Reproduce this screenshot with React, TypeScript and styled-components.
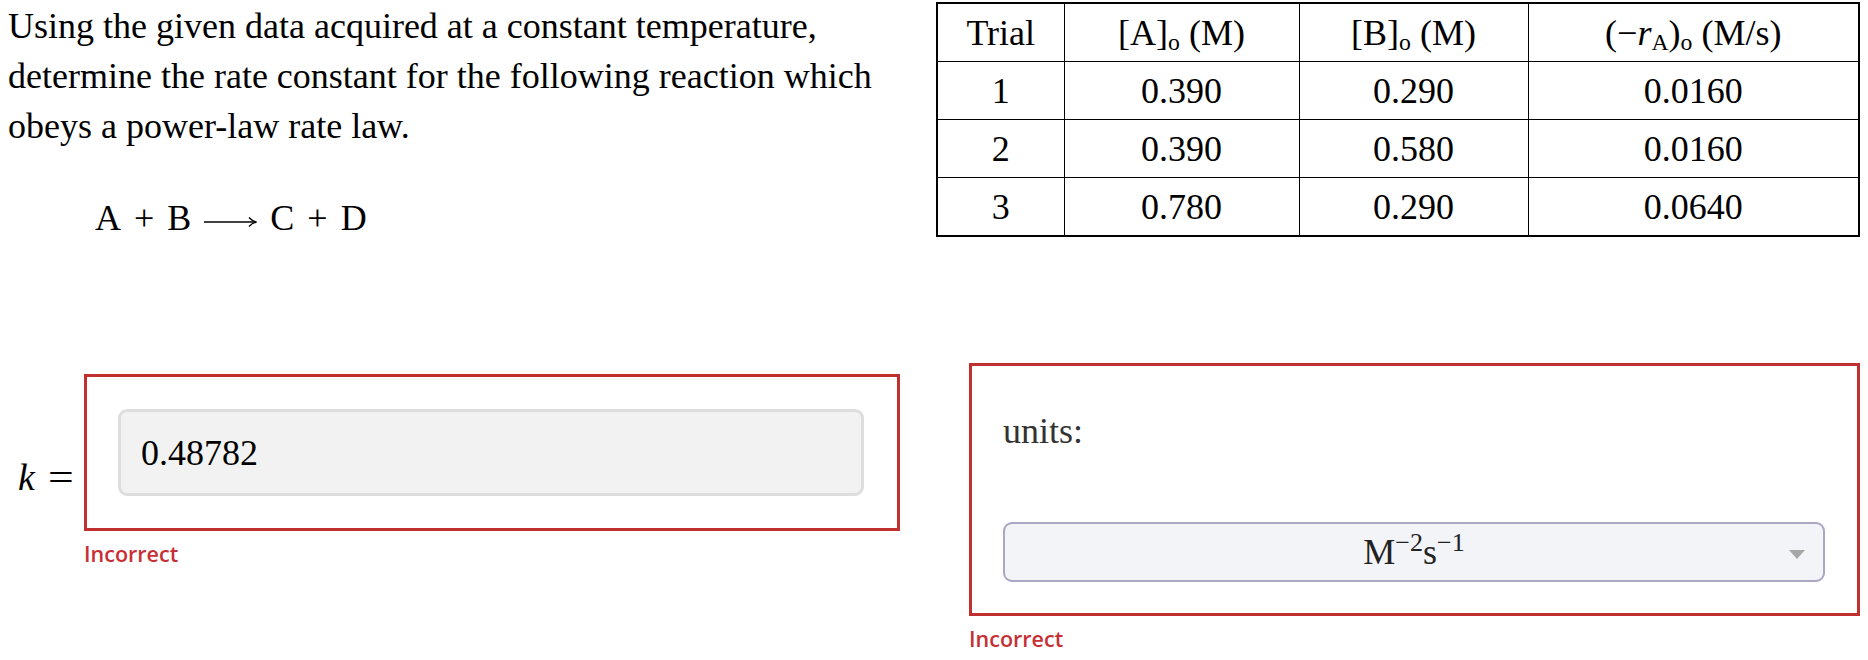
import React from 'react'
import styled, { createGlobalStyle } from 'styled-components'

const GlobalStyle = createGlobalStyle`
  html, body {
    margin: 0;
    padding: 0;
    background: #fff;
  }
  body {
    font-family: "Liberation Serif", "Times New Roman", serif;
    color: #000;
  }
`

const Page = styled.main`
  width: 1868px;
  box-sizing: border-box;
  padding: 1px 8px 0;
`

const TopRow = styled.section`
  display: flex;
  justify-content: space-between;
  align-items: flex-start;
`

const Prompt = styled.div`
  width: 912px;
  font-size: 36px;
  line-height: 50px;
`

const Paragraph = styled.p`
  margin: 0;
`

const Equation = styled.div`
  margin: 42px 0 0 87px;
  white-space: nowrap;
`

const Op = styled.span<{ $space: number }>`
  display: inline-block;
  margin: 0 ${p => p.$space}px;
`

const ArrowIcon = styled.svg`
  display: inline-block;
  vertical-align: 1px;
  margin: 0 13px;
`

const DataTable = styled.table`
  width: 922px;
  margin-top: 1px;
  border-collapse: collapse;
  table-layout: fixed;
  border: 2px solid #000;
  font-size: 36px;
`

const Cell = styled.td`
  border: 1px solid #000;
  height: 57px;
  padding: 0;
  text-align: center;
  vertical-align: middle;
  font-weight: normal;
  white-space: nowrap;
`

const Sub = styled.sub`
  font-size: 0.66em;
  vertical-align: -0.22em;
  line-height: 0;
`

const AnswerRow = styled.section`
  display: flex;
  justify-content: space-between;
  align-items: flex-start;
  margin-top: 120px;
`

const FieldGroup = styled.div<{ $offset?: number }>`
  display: flex;
  flex-direction: column;
  margin-top: ${p => p.$offset ?? 0}px;
`

const KField = styled.div`
  display: flex;
  align-items: flex-start;
`

const MathLabel = styled.div`
  width: 66px;
  padding: 83px 0 0 10px;
  display: flex;
  gap: 13px;
  font-size: 38px;
  line-height: 40px;
`

const Equals = styled.span`
  display: inline-block;
  transform: scaleX(1.2);
  transform-origin: left center;
`

const Frame = styled.div<{ $width: number; $pad: string }>`
  width: ${p => p.$width}px;
  box-sizing: border-box;
  border: 3px solid #c0302f;
  padding: ${p => p.$pad};
`

const ValueInput = styled.input`
  display: block;
  width: 100%;
  height: 87px;
  box-sizing: border-box;
  border: 3px solid #dedede;
  border-radius: 9px;
  background: #f2f2f2;
  padding: 0 20px;
  font-family: "Liberation Serif", "Times New Roman", serif;
  font-size: 36px;
  color: #000;
  outline: none;
`

const Feedback = styled.div`
  margin-top: 9px;
  font-family: "Open Sans", "Noto Sans", sans-serif;
  font-size: 21.5px;
  font-weight: 600;
  line-height: 28px;
  color: #c62f33;
`

const UnitsLabel = styled.div`
  font-size: 36px;
  line-height: 40px;
  color: #333;
`

const SelectBox = styled.div`
  position: relative;
  margin-top: 71px;
  height: 60px;
  box-sizing: border-box;
  border: 2px solid #aaa7c2;
  border-radius: 9px;
  background: #f3f4f8;
  display: flex;
  align-items: center;
  justify-content: center;
  font-size: 36px;
  color: #222;
`

const Sup = styled.sup`
  font-size: 26px;
  vertical-align: 13px;
  line-height: 0;
`

const Caret = styled.svg`
  position: absolute;
  right: 18px;
  top: 50%;
  margin-top: -2px;
`

const rows = [
  ['1', '0.390', '0.290', '0.0160'],
  ['2', '0.390', '0.580', '0.0160'],
  ['3', '0.780', '0.290', '0.0640'],
]

const App = () => {
  return (
    <>
      <GlobalStyle />
      <Page>
        <TopRow>
          <Prompt>
            <Paragraph>
              Using the given data acquired at a constant temperature, determine the rate
              constant for the following reaction which obeys a power-law rate law.
            </Paragraph>
            <Equation>
              A<Op $space={13}>+</Op>B
              <ArrowIcon width="53" height="14" viewBox="0 0 53 14">
                <path d="M0 7 H51" stroke="#000" strokeWidth="1.5" fill="none" />
                <path d="M45 2.5 Q48 6 52.5 7 Q48 8 45 11.5" stroke="#000" strokeWidth="1.4" fill="none" />
              </ArrowIcon>
              C<Op $space={13}>+</Op>D
            </Equation>
          </Prompt>

          <DataTable>
            <colgroup>
              <col style={{ width: 127 }} />
              <col style={{ width: 235 }} />
              <col style={{ width: 229 }} />
              <col style={{ width: 331 }} />
            </colgroup>
            <thead>
              <tr>
                <Cell as="th">Trial</Cell>
                <Cell as="th">[A]<Sub>o</Sub> (M)</Cell>
                <Cell as="th">[B]<Sub>o</Sub> (M)</Cell>
                <Cell as="th">(−<i>r</i><Sub>A</Sub>)<Sub>o</Sub> (M/s)</Cell>
              </tr>
            </thead>
            <tbody>
              {rows.map(r => (
                <tr key={r[0]}>
                  {r.map((v, i) => (
                    <Cell key={i}>{v}</Cell>
                  ))}
                </tr>
              ))}
            </tbody>
          </DataTable>
        </TopRow>

        <AnswerRow>
          <FieldGroup $offset={11}>
            <KField>
              <MathLabel>
                <i>k</i>
                <Equals>=</Equals>
              </MathLabel>
              <FieldGroup>
                <Frame $width={816} $pad="32px 33px 32px 31px">
                  <ValueInput readOnly value="0.48782" />
                </Frame>
                <Feedback>Incorrect</Feedback>
              </FieldGroup>
            </KField>
          </FieldGroup>

          <FieldGroup>
            <Frame $width={891} $pad="45px 32px 31px 31px">
              <UnitsLabel>units:</UnitsLabel>
              <SelectBox>
                <span>
                  M<Sup>−2</Sup>s<Sup>−1</Sup>
                </span>
                <Caret width="16" height="9" viewBox="0 0 16 9">
                  <polygon points="0,0 16,0 8,9" fill="#a6a6a6" />
                </Caret>
              </SelectBox>
            </Frame>
            <Feedback>Incorrect</Feedback>
          </FieldGroup>
        </AnswerRow>
      </Page>
    </>
  )
}

export default App
